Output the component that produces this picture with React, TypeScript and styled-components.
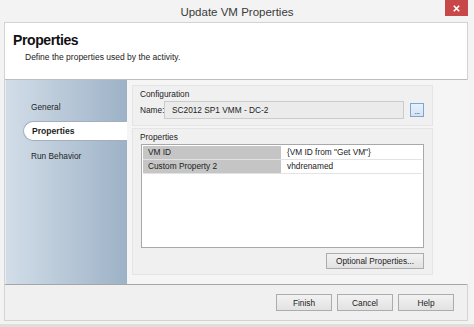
import React from 'react';
import styled, { createGlobalStyle } from 'styled-components';

const Global = createGlobalStyle`
  html, body { margin: 0; padding: 0; }
  body {
    width: 474px; height: 327px; overflow: hidden;
    background: #f3f3f3;
    font-family: "Liberation Sans", Arial, sans-serif;
    color: #222;
  }
`;

const Frame = styled.div`
  width: 474px; height: 327px;
  display: flex; flex-direction: column;
  background: #f3f3f3;
`;

const TitleBar = styled.div`
  height: 22px; flex: none;
  display: grid; grid-template-columns: 1fr auto 1fr; align-items: start;
`;

const Title = styled.div`
  grid-column: 2;
  font-size: 11.5px; line-height: 24px; color: #3a3a3a;
`;

const CloseButton = styled.div`
  grid-column: 3; justify-self: end;
  margin-right: 6px; width: 23px; height: 16px;
  background: #c8484a;
  display: flex; align-items: center; justify-content: center;
`;

const Window = styled.div`
  flex: none; height: 297px;
  margin: 0 6px 0 4px;
  border: 1px solid #d3d3d3;
  display: flex; flex-direction: column;
  background: #f0f0f0;
`;

const Header = styled.div`
  height: 57px; flex: none;
  background: #fff;
  border-bottom: 1px solid #bdbdbd;
  padding: 9px 0 0 8px;
  box-sizing: border-box;
`;

const Heading = styled.div`
  font-size: 14px; font-weight: bold; line-height: 16px;
  letter-spacing: -0.4px; color: #111;
`;

const SubTitle = styled.div`
  margin: 3px 0 0 12px;
  font-size: 8.5px; line-height: 12px; color: #222;
`;

const Body = styled.div`
  height: 204px; flex: none;
  display: flex;
`;

const Nav = styled.div`
  width: 122px; flex: none;
  background: linear-gradient(to right, #d2dde8, #9db2c7);
  border-left: 1px solid #e6edf3;
  padding: 17px 0 0 17px;
  box-sizing: border-box;
  display: flex; flex-direction: column; gap: 5px;
`;

const NavItem = styled.div<{ $active?: boolean }>`
  height: 20px; box-sizing: border-box;
  display: flex; align-items: center;
  padding-left: 8px;
  font-size: ${p => (p.$active ? '8.6px' : '8.3px')};
  font-weight: ${p => (p.$active ? 'bold' : 'normal')};
  color: #1e1e1e;
  ${p =>
    p.$active &&
    `
    margin-top: -1px;
    background: #fff;
    border: 1px solid #a3afbb;
    border-right: none;
    border-radius: 10px 0 0 10px;
  `}
`;

const Content = styled.div`
  flex: 1;
  background: #f5f5f5;
  padding: 5px 36px 0 5px;
  display: flex; flex-direction: column; gap: 2px;
`;

const Group = styled.div<{ $h: number }>`
  height: ${p => p.$h}px; box-sizing: border-box;
  background: #f0f0f0;
  border: 1px solid #e4e4e4;
  padding: 2px 7px 0 8px;
  display: flex; flex-direction: column;
`;

const GroupLabel = styled.div`
  font-size: 8.3px; line-height: 12px; color: #222;
  margin-left: -1px;
`;

const NameRow = styled.div`
  display: flex; align-items: center;
  margin-top: 1px;
`;

const FieldLabel = styled.div`
  width: 24px; flex: none;
  font-size: 8.3px; color: #222;
  margin-left: -1px;
`;

const TextField = styled.div`
  width: 240px; height: 18px; box-sizing: border-box;
  background: #ebebeb;
  border: 1px solid #cbcbcb;
  padding-left: 7px;
  display: flex; align-items: center;
  font-size: 8.3px; color: #222;
`;

const BrowseButton = styled.div`
  width: 14px; height: 14px; box-sizing: border-box;
  margin-left: 6px;
  background: linear-gradient(#e8f1fb, #d3e3f5);
  border: 1px solid #7fa3d2;
  display: flex; align-items: flex-end; justify-content: center;
  font-size: 8px; line-height: 9px; color: #333; letter-spacing: -0.5px;
`;

const Table = styled.div`
  margin-top: 1px;
  width: 283px; height: 104px; box-sizing: border-box;
  background: #fff;
  border: 1px solid #a8a8a8;
  padding: 1px;
`;

const Row = styled.div`
  display: grid; grid-template-columns: 138px 1fr;
  height: 13.5px;
`;

const KeyCell = styled.div`
  background: #c5c5c5;
  border-bottom: 1px solid #e2e2e2;
  padding-left: 5px;
  font-size: 8.3px; line-height: 13px; color: #222;
  overflow: hidden; white-space: nowrap;
`;

const ValueCell = styled.div`
  background: #fff;
  border-bottom: 1px solid #e3e3e3;
  padding-left: 6px;
  font-size: 8.3px; line-height: 13px; color: #222;
  white-space: nowrap;
`;

const ButtonRow = styled.div<{ $pad?: number }>`
  display: flex; justify-content: flex-end; gap: 5px;
  padding-right: ${p => p.$pad ?? 0}px;
`;

const PushButton = styled.div<{ $w: number; $h: number }>`
  width: ${p => p.$w}px; height: ${p => p.$h}px; box-sizing: border-box;
  background: linear-gradient(#f2f2f2, #e2e2e2);
  border: 1px solid #acacac;
  display: flex; align-items: center; justify-content: center;
  font-size: 8.3px; color: #222;
`;

const OptionalRow = styled(ButtonRow)`
  width: 283px; margin-top: 5px;
`;

const Footer = styled.div`
  flex: 1;
  border-top: 1px solid #a6a6a6;
  display: flex; align-items: center; justify-content: flex-end;
  padding-right: 13px;
  background: #f0f0f0;
`;

const BottomStrip = styled.div`
  flex: 1;
  margin-top: 3px;
  background: #dedede;
`;

export default function App() {
  return (
    <>
      <Global />
      <Frame>
        <TitleBar>
          <Title>Update VM Properties</Title>
          <CloseButton>
            <svg width="7" height="7" viewBox="0 0 7 7">
              <path d="M0.8 0.8 L6.2 6.2 M6.2 0.8 L0.8 6.2" stroke="#fff" strokeWidth="1.6" />
            </svg>
          </CloseButton>
        </TitleBar>
        <Window>
          <Header>
            <Heading>Properties</Heading>
            <SubTitle>Define the properties used by the activity.</SubTitle>
          </Header>
          <Body>
            <Nav>
              <NavItem>General</NavItem>
              <NavItem $active>Properties</NavItem>
              <NavItem>Run Behavior</NavItem>
            </Nav>
            <Content>
              <Group $h={41}>
                <GroupLabel>Configuration</GroupLabel>
                <NameRow>
                  <FieldLabel>Name:</FieldLabel>
                  <TextField>SC2012 SP1 VMM - DC-2</TextField>
                  <BrowseButton>...</BrowseButton>
                </NameRow>
              </Group>
              <Group $h={147}>
                <GroupLabel>Properties</GroupLabel>
                <Table>
                  <Row>
                    <KeyCell>VM ID</KeyCell>
                    <ValueCell>{'{VM ID from "Get VM"}'}</ValueCell>
                  </Row>
                  <Row>
                    <KeyCell>Custom Property 2</KeyCell>
                    <ValueCell>vhdrenamed</ValueCell>
                  </Row>
                </Table>
                <OptionalRow $pad={1}>
                  <PushButton $w={98} $h={16}>Optional Properties...</PushButton>
                </OptionalRow>
              </Group>
            </Content>
          </Body>
          <Footer>
            <ButtonRow>
              <PushButton $w={56} $h={17}>Finish</PushButton>
              <PushButton $w={56} $h={17}>Cancel</PushButton>
              <PushButton $w={56} $h={17}>Help</PushButton>
            </ButtonRow>
          </Footer>
        </Window>
        <BottomStrip />
      </Frame>
    </>
  );
}
